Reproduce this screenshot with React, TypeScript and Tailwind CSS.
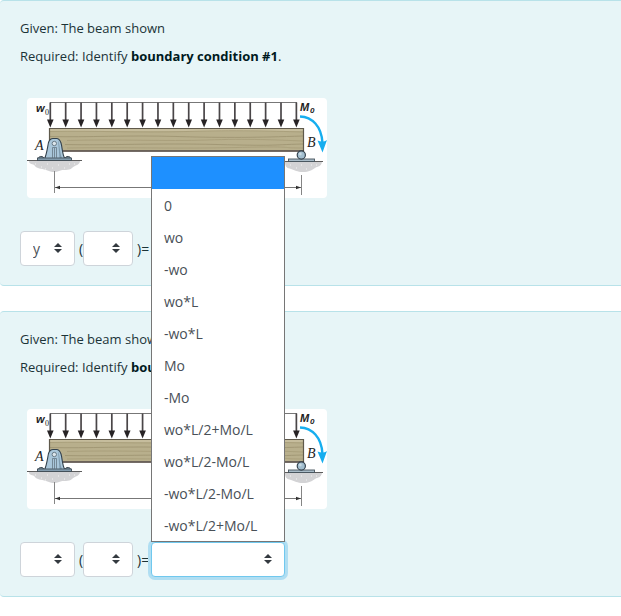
import React from "react";

const answers = [
  "",
  "0",
  "wo",
  "-wo",
  "wo*L",
  "-wo*L",
  "Mo",
  "-Mo",
  "wo*L/2+Mo/L",
  "wo*L/2-Mo/L",
  "-wo*L/2-Mo/L",
  "-wo*L/2+Mo/L",
];

const loadArrows = Array.from({ length: 17 }, (_, i) => 23.3 + i * 15.38);

const grain = [
  "M23 33.5 C70 32.5 110 35 160 33.5 S240 33 276 34",
  "M23 38.5 C60 39.5 100 37 150 38.5 S230 39.5 276 38",
  "M40 42.5 C90 41 140 43.5 180 42 S250 42 276 43",
  "M38 46.5 C80 47.5 130 45 190 46.5 S240 47 276 46",
  "M40 50 C100 49 150 51 210 49.5 S250 50 276 50",
];

function Beam() {
  return (
    <svg
      viewBox="0 0 300 100"
      role="img"
      aria-label="Beam A B under a distributed load and an end moment"
      className="ml-[7px] mt-7 block w-[300px] rounded bg-white"
    >
      {/* Distributed load */}
      <path d="M23 4.5H270" stroke="#777" strokeWidth="1" />
      {loadArrows.map((x) => (
        <g key={x}>
          <path d={`M${x} 4.5V23`} stroke="#4a4648" strokeWidth="1.7" />
          <path d={`M${x - 3.3} 21.5h6.6l-3.3 8z`} fill="#272325" />
        </g>
      ))}

      {/* Beam */}
      <rect x="22.5" y="30.5" width="254" height="22" fill="#b8af8c" />
      <rect x="23" y="31" width="253" height="2" fill="#c6bd9d" />
      {grain.map((d, i) => (
        <path key={d} d={d} fill="none" stroke={i % 2 ? "#9f9573" : "#a89e7b"} strokeWidth="0.9" />
      ))}
      <path d="M22.5 53V30.5H276.5V53" fill="none" stroke="#5f594b" strokeWidth="1.2" />
      <path d="M22 53H277" stroke="#463b35" strokeWidth="1.6" />

      {/* Pin support */}
      <path d="M2 63H53C53 67 48 67 45 70S36 71 32 73 24 74 19 72 10 71 8 68 2 67 2 63Z" fill="#d3d3d5" />
      <path
        d="M8 66h1M14 69h1M20 66h1M25 70h1M31 67h1M37 70h1M42 66h1M47 66h1M18 71h1"
        stroke="#f4f4f4"
        strokeWidth="1.2"
      />
      <path d="M0 62.5H55" stroke="#5c5c5c" strokeWidth="1" />
      <path d="M11 61.5C11 57.5 17 57.5 17 61M38 61C38 57.5 44 57.5 44 61.5" fill="#8198a8" stroke="#35424c" />
      <path
        d="M17.5 61C20 55 20.5 49 21.5 44.5C22.5 41.5 24 40.5 26 40.5H29.5C32 40.5 33 42 34 45C35.5 50 35 56 38 61Z"
        fill="#a9c6da"
        stroke="#34424d"
        strokeWidth="1.1"
      />
      <path d="M31 42C33 46 32.5 54 35 60H32.5Z" fill="#7f9cb0" />
      <rect x="10.5" y="60" width="34" height="2.3" fill="#8ba6b8" stroke="#35424c" strokeWidth="0.8" />
      <circle cx="27.3" cy="45.5" r="2.2" fill="#dce6ec" stroke="#6b7c88" />
      <path d="M25.5 60V49.5H29.5V60M27.5 50V60" fill="none" stroke="#5d6d79" strokeWidth="0.7" />

      {/* Roller support */}
      <path d="M258 64H295C294 69 291 68 288 70S282 74 276 74 268 72 264 71 258 69 258 64Z" fill="#d3d3d5" />
      <path d="M263 67h1M269 70h1M274 67h1M279 71h1M284 67h1M289 67h1" stroke="#f4f4f4" strokeWidth="1.2" />
      <path d="M258 63.5H296" stroke="#5c5c5c" />
      <rect x="261.5" y="61" width="26" height="2.5" fill="#a9bcc8" stroke="#45525b" strokeWidth="0.9" />
      <circle cx="274.3" cy="57" r="4.1" fill="#a3bfd0" stroke="#34424d" strokeWidth="1.2" />
      <circle cx="273.3" cy="56" r="1.4" fill="#c9dbe5" />

      {/* Span dimension */}
      <path d="M27.5 73V95M274.5 77V97" stroke="#858585" />
      <path d="M28 89.5H274" stroke="#777" />
      <path d="M28 89.5l5-1.8v3.6zM274 89.5l-5-1.8v3.6z" fill="#333" />

      {/* End moment */}
      <path d="M273 18.5C285 19 294.5 28 295.5 45" fill="none" stroke="#16aeef" strokeWidth="2.4" />
      <path d="M290.5 42.5C294 44 297 44 300 42L295.5 54.5Z" fill="#16aeef" />

      <g fill="#222">
        <text x="9" y="14" className="font-['Liberation_Sans'] text-[11px] font-bold italic">w</text>
        <text x="18" y="17" className="font-['Liberation_Serif'] text-[8px]">0</text>
        <text x="273" y="13" className="font-['Liberation_Sans'] text-[11px] font-bold italic">M</text>
        <text x="283" y="15" className="font-['Liberation_Sans'] text-[8px] font-bold italic">0</text>
        <text x="8" y="52" className="font-['Liberation_Serif'] text-[14px] italic">A</text>
        <text x="280" y="49" className="font-['Liberation_Serif'] text-[14px] italic">B</text>
      </g>
    </svg>
  );
}

type PickerProps = {
  label: string;
  options: string[];
  width: string;
  value?: string;
  open?: boolean;
};

function Picker({ label, options, width, value = "", open = false }: PickerProps) {
  return (
    <div className={`relative ${width}`}>
      <select
        aria-label={label}
        defaultValue={value}
        className={`block h-[35px] w-full appearance-none rounded border bg-white px-3 text-[14px] text-[#495057] outline-none ${
          open ? "border-[#70c8ee] ring-3 ring-[#b0def2]" : "border-[#ced4da]"
        }`}
      >
        {options.map((o) => (
          <option key={o} value={o}>
            {o}
          </option>
        ))}
      </select>
      <svg
        viewBox="0 0 4 5"
        className="pointer-events-none absolute right-[13px] top-3 h-[10px] w-2"
        aria-hidden="true"
      >
        <path fill="#343a40" d="M2 0L0 2h4zm0 5L0 3h4z" />
      </svg>
      {open && (
        <ul
          role="listbox"
          aria-label={`${label} options`}
          className="absolute bottom-full left-0 z-10 w-full border border-[#767676] bg-white text-[14px] leading-[34px] text-[#495057]"
        >
          {options.map((o, i) => (
            <li
              key={o}
              role="option"
              aria-selected={i === 0}
              className={`h-8 px-3 ${i === 0 ? "bg-[#1e90ff]" : ""}`}
            >
              {o}
            </li>
          ))}
        </ul>
      )}
    </div>
  );
}

function Question({ number, variable, open }: { number: number; variable: string; open?: boolean }) {
  return (
    <section className="rounded-l border-y border-[#b8e2e9] bg-[#e7f5f7] px-5 pb-[19px] pt-[13px]">
      <p className="leading-7">Given: The beam shown</p>
      <p className="leading-7">
        Required: Identify <strong className="font-bold text-[#001a1e]">boundary condition #{number}</strong>.
      </p>
      <Beam />
      <div className="mt-[33px] flex items-center text-[14px]">
        <Picker label={`Variable ${number}`} options={["", "y", "M", "V"]} value={variable} width="w-[55px]" />
        <span className="w-2 pl-1">(</span>
        <Picker label={`Position ${number}`} options={["", "0", "L"]} width="w-[50px]" />
        <span className="w-[18px] pl-1">)=</span>
        <Picker label={`Value ${number}`} options={answers} width="w-[134px]" open={open} />
      </div>
    </section>
  );
}

export default function App() {
  return (
    <main className="flex min-h-screen flex-col gap-[25px] bg-white font-['Open_Sans',sans-serif] text-[13px] text-[#1b3337]">
      <Question number={1} variable="y" />
      <Question number={2} variable="" open />
    </main>
  );
}
